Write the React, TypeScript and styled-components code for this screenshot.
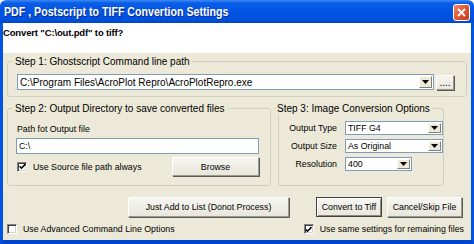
import styled, { createGlobalStyle } from "styled-components";

const GlobalStyle = createGlobalStyle`
  html, body {
    margin: 0;
    padding: 0;
    background: #ffffff;
  }
  body {
    font-family: "Liberation Sans", Arial, sans-serif;
    font-size: 8.8px;
    color: #000000;
  }
`;

const Frame = styled.div`
  width: 474px;
  height: 244px;
  display: flex;
  flex-direction: column;
  overflow: hidden;
`;

const TitleBar = styled.div`
  height: 23px;
  flex: none;
  display: flex;
  align-items: center;
  justify-content: space-between;
  padding: 1px 4px 0 4px;
  box-sizing: border-box;
  background: linear-gradient(#3d8af5 0, #0a5ee6 3px, #0055e5 45%, #0050dc 85%, #0046c8 100%);
  border-radius: 6px 6px 0 0;
`;

const Title = styled.span`
  font-weight: bold;
  font-size: 12.5px;
  color: #ffffff;
  text-shadow: 1px 1px 0 #0a2a8a;
  white-space: nowrap;
  transform: scaleX(0.85);
  transform-origin: left center;
`;

const CloseButton = styled.div`
  width: 17px;
  height: 17px;
  box-sizing: border-box;
  border: 1px solid #ffffff;
  border-radius: 3px;
  background: linear-gradient(135deg, #f08a6a 0%, #e05a36 45%, #c6401e 100%);
  display: flex;
  align-items: center;
  justify-content: center;
`;

const Client = styled.div`
  flex: 1;
  display: flex;
  flex-direction: column;
  border-left: 3px solid #0054e3;
  border-right: 3px solid #0054e3;
  border-bottom: 4px solid #0046cc;
  background: #ece9d8;
`;

const Header = styled.div`
  height: 30px;
  flex: none;
  background: #ffffff;
  font-weight: bold;
  font-size: 9.5px;
  letter-spacing: -0.15px;
  padding: 4px 0 0 0;
  box-sizing: border-box;
`;

const Body = styled.div`
  flex: 1;
  display: flex;
  flex-direction: column;
  padding: 3px 4px 0 4px;
`;

const Group = styled.fieldset<{ $width?: number }>`
  margin: 0;
  border: 1px solid #d0d0bf;
  border-radius: 3px;
  min-width: 0;
  box-sizing: border-box;
  ${(p) => (p.$width ? `width: ${p.$width}px; flex: none;` : "")}
`;

const Legend = styled.legend`
  padding: 0 2px;
  margin-left: -4px;
  line-height: 11px;
  font-size: 10px;
  color: #000000;
`;

const Step1 = styled(Group)`
  padding: 7px 12px 6px 9px;
`;

const PathRow = styled.div`
  display: flex;
  align-items: center;
  gap: 2px;
  font-size: 10px;
`;

const ComboBox = styled.div<{ $width?: number; $height?: number }>`
  display: flex;
  align-items: stretch;
  box-sizing: border-box;
  height: ${(p) => p.$height ?? 14}px;
  ${(p) => (p.$width ? `width: ${p.$width}px;` : "flex: 1;")}
  background: #ffffff;
  border: 1px solid #7f9db9;
`;

const ComboText = styled.div`
  flex: 1;
  padding-left: 2px;
  display: flex;
  align-items: center;
  white-space: nowrap;
  overflow: hidden;
`;

const ArrowButton = styled.div`
  width: 13px;
  flex: none;
  margin: 1px;
  box-sizing: border-box;
  background: #ece9d8;
  border: 1px solid;
  border-color: #ffffff #808080 #808080 #ffffff;
  display: flex;
  align-items: center;
  justify-content: center;
`;

const Button = styled.div<{ $width: number; $height?: number; $default?: boolean }>`
  width: ${(p) => p.$width}px;
  height: ${(p) => p.$height ?? 20}px;
  flex: none;
  box-sizing: border-box;
  display: flex;
  align-items: center;
  justify-content: center;
  background: linear-gradient(#f6f5f0, #e8e6dc);
  border: 1px solid;
  border-color: ${(p) => (p.$default ? "#404040" : "#ffffff #9a9a90 #9a9a90 #ffffff")};
  box-shadow: ${(p) =>
    p.$default ? "inset 1px 1px 0 #ffffff, inset -1px -1px 0 #8a8a80" : "1px 1px 0 #5a5a55"};
  white-space: nowrap;
`;

const Row = styled.div`
  display: flex;
  gap: 7px;
  margin-top: 6px;
  height: 83px;
`;

const Step2 = styled(Group)`
  padding: 10px 11px 0 9px;
  display: flex;
  flex-direction: column;
`;

const FieldLabel = styled.div`
  line-height: 11px;
`;

const TextInput = styled.div`
  height: 16px;
  margin: 3px 0 0 -1px;
  box-sizing: border-box;
  border: 1px solid #7f9db9;
  background: #ffffff;
  padding-left: 2px;
  display: flex;
  align-items: center;
`;

const CheckRow = styled.div`
  display: flex;
  align-items: center;
  justify-content: space-between;
  margin-top: 3px;
`;

const CheckLabel = styled.label`
  display: flex;
  align-items: center;
  gap: 6px;
  white-space: nowrap;
`;

const Box = styled.span`
  width: 10px;
  height: 10px;
  box-sizing: border-box;
  flex: none;
  background: #ffffff;
  border: 1px solid;
  border-color: #808080 #ffffff #ffffff #808080;
  box-shadow: inset 1px 1px 0 #404040, inset -1px -1px 0 #d4d0c8;
  display: flex;
  align-items: center;
  justify-content: center;
`;

const Step3 = styled(Group)`
  padding: 7px 0 0 0;
  margin-right: 3px;
  display: flex;
  flex-direction: column;
  gap: 4px;
`;

const OptionRow = styled.div`
  display: flex;
  align-items: center;
  gap: 8px;
`;

const OptionLabel = styled.div`
  width: 58px;
  text-align: right;
`;

const ButtonRow = styled.div`
  display: flex;
  align-items: center;
  margin-top: 11px;
  padding-left: 121px;
`;

const Spacer = styled.div<{ $w: number }>`
  width: ${(p) => p.$w}px;
  flex: none;
`;

const FooterRow = styled.div`
  display: flex;
  align-items: center;
  justify-content: space-between;
  margin-top: 7px;
  padding-right: 3px;
`;

function Arrow() {
  return (
    <svg width="7" height="4" viewBox="0 0 7 4">
      <path d="M0 0h7L3.5 4z" fill="#000000" />
    </svg>
  );
}

function Check({ checked }: { checked?: boolean }) {
  return (
    <Box>
      {checked && (
        <svg width="7" height="7" viewBox="0 0 7 7">
          <path d="M0.5 3.2l2 2 4-4.2" fill="none" stroke="#000000" strokeWidth="1.6" />
        </svg>
      )}
    </Box>
  );
}

function Combo({ value, width, height }: { value: string; width?: number; height?: number }) {
  return (
    <ComboBox $width={width} $height={height}>
      <ComboText>{value}</ComboText>
      <ArrowButton>
        <Arrow />
      </ArrowButton>
    </ComboBox>
  );
}

export default function App() {
  return (
    <>
      <GlobalStyle />
      <Frame>
        <TitleBar>
          <Title>PDF , Postscript to TIFF Convertion Settings</Title>
          <CloseButton>
            <svg width="9" height="9" viewBox="0 0 9 9">
              <path d="M1 1l7 7M8 1l-7 7" stroke="#ffffff" strokeWidth="1.8" />
            </svg>
          </CloseButton>
        </TitleBar>
        <Client>
          <Header>Convert "C:\out.pdf" to tiff?</Header>
          <Body>
            <Step1>
              <Legend>Step 1: Ghostscript Command line path</Legend>
              <PathRow>
                <Combo value="C:\Program Files\AcroPlot Repro\AcroPlotRepro.exe" height={16} />
                <Button $width={18} $height={15}>
                  ....
                </Button>
              </PathRow>
            </Step1>
            <Row>
              <Step2 $width={264}>
                <Legend>Step 2: Output Directory to save converted files</Legend>
                <FieldLabel>Path fot Output file</FieldLabel>
                <TextInput>C:\</TextInput>
                <CheckRow>
                  <CheckLabel>
                    <Check checked />
                    Use Source file path always
                  </CheckLabel>
                  <Button $width={87} $height={19}>
                    Browse
                  </Button>
                </CheckRow>
              </Step2>
              <Step3>
                <Legend>Step 3: Image Conversion Options</Legend>
                <OptionRow>
                  <OptionLabel>Output Type</OptionLabel>
                  <Combo value="TIFF G4" width={98} />
                </OptionRow>
                <OptionRow>
                  <OptionLabel>Output Size</OptionLabel>
                  <Combo value="As Original" width={98} />
                </OptionRow>
                <OptionRow>
                  <OptionLabel>Resolution</OptionLabel>
                  <Combo value="400" width={67} />
                </OptionRow>
              </Step3>
            </Row>
            <ButtonRow>
              <Button $width={161}>Just Add to List (Donot Process)</Button>
              <Spacer $w={27} />
              <Button $width={66} $default>
                Convert to Tiff
              </Button>
              <Spacer $w={5} />
              <Button $width={75}>Cancel/Skip File</Button>
            </ButtonRow>
            <FooterRow>
              <CheckLabel>
                <Check />
                Use Advanced Command Line Options
              </CheckLabel>
              <CheckLabel>
                <Check checked />
                Use same settings for remaining files
              </CheckLabel>
            </FooterRow>
          </Body>
        </Client>
      </Frame>
    </>
  );
}
